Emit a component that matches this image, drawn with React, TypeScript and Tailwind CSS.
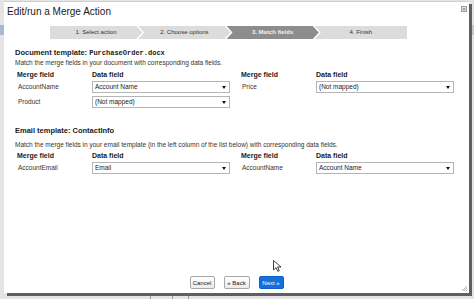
import React from "react";

type Row = { field: string; value: string };

const steps = ["1. Select action", "2. Choose options", "3. Match fields", "4. Finish"];

function Select({ value }: { value: string }) {
  return (
    <div className="flex h-[12px] w-[138px] items-center justify-between border border-[#b5b5b5] bg-white pl-[2px] pr-[3px] text-[6.5px] leading-none text-[#222]">
      <span>{value}</span>
      <span className="h-0 w-0 border-x-[2px] border-t-[3px] border-x-transparent border-t-[#111]" />
    </div>
  );
}

function FieldTable({ rows }: { rows: Row[] }) {
  return (
    <div className="flex w-[214px] flex-col gap-[3px] self-start">
      <div className="-mb-[2px] flex h-[10px] items-center text-[7px] font-bold text-[#222]">
        <span className="w-[76px] pl-[1px]">Merge field</span>
        <span>Data field</span>
      </div>
      {rows.map((r) => (
        <div key={r.field} className="flex items-center">
          <span className="w-[76px] pl-[2px] text-[6.5px] text-[#333]">{r.field}</span>
          <Select value={r.value} />
        </div>
      ))}
    </div>
  );
}

function Stepper() {
  return (
    <div className="ml-[46px] flex h-[13px] w-[357px]">
      {steps.map((s, i) => {
        const first = i === 0;
        const last = i === steps.length - 1;
        const active = i === 2;
        const clip = first
          ? "[clip-path:polygon(0_0,calc(100%_-_6px)_0,100%_50%,calc(100%_-_6px)_100%,0_100%)]"
          : last
          ? "[clip-path:polygon(0_0,100%_0,100%_100%,0_100%,6px_50%)]"
          : "[clip-path:polygon(0_0,calc(100%_-_6px)_0,100%_50%,calc(100%_-_6px)_100%,0_100%,6px_50%)]";
        return (
          <div
            key={s}
            className={`flex flex-1 items-center justify-center text-[6px] ${first ? "" : "-ml-[4px]"} ${clip} ${
              active ? "bg-[#8d8d8d] font-bold text-[#f2f2f2]" : "bg-[#dcdcdc] text-[#333]"
            }`}
          >
            {s}
          </div>
        );
      })}
    </div>
  );
}

export default function App() {
  return (
    <div className="relative h-[299px] w-[474px] overflow-hidden bg-[#e4e4e4] font-['Liberation_Sans',Arial,sans-serif]">
      {/* page behind the dialog */}
      <div className="absolute left-0 top-[25px] h-[10px] w-[6px] bg-[#a9b9cf]" />
      <div className="absolute right-0 top-[25px] h-[10px] w-[4px] bg-[#c9c9c9]" />
      <div className="absolute bottom-0 left-[150px] h-[4px] w-[1px] bg-[#9a9a9a]" />
      <div className="absolute bottom-0 left-[172px] h-[4px] w-[1px] bg-[#9a9a9a]" />
      <div className="absolute bottom-0 left-[188px] h-[4px] w-[1px] bg-[#9a9a9a]" />

      {/* dialog */}
      <div className="absolute left-[4px] top-[1px] flex h-[292px] w-[465px] flex-col border-t border-[#cfcfcf] bg-white shadow-[3px_3px_0_#5f5f5f]">
        <div className="flex items-start justify-between pl-[3px] pr-[2px] pt-[3px]">
          <h1 className="text-[10px] leading-[14px] text-[#1a1a1a]">Edit/run a Merge Action</h1>
          <div className="mt-[1px] flex h-[6px] w-[6px] items-center justify-center border border-[#9a9a9a] bg-[#e6e6e6] text-[5px] leading-none text-[#444]">
            ×
          </div>
        </div>

        <div className="mt-[7px]">
          <Stepper />
        </div>

        <div className="mt-[9px] pl-[11px]">
          <div className="text-[7.5px] font-bold leading-[10px] text-[#1a1a1a]">
            Document template:{" "}
            <span className="font-['Liberation_Mono',monospace] text-[7px]">PurchaseOrder.docx</span>
          </div>
          <p className="text-[6.5px] leading-[9px] text-[#333]">
            Match the merge fields in your document with corresponding data fields.
          </p>
          <div className="mt-[3px] flex gap-[10px] pl-[1px]">
            <FieldTable
              rows={[
                { field: "AccountName", value: "Account Name" },
                { field: "Product", value: "(Not mapped)" },
              ]}
            />
            <FieldTable rows={[{ field: "Price", value: "(Not mapped)" }]} />
          </div>

          <div className="mt-[18px] text-[7.5px] font-bold leading-[10px] text-[#1a1a1a]">
            Email template: ContactInfo
          </div>
          <p className="mt-[4px] text-[6.5px] leading-[9px] text-[#333]">
            Match the merge fields in your email template (in the left column of the list below) with corresponding data
            fields.
          </p>
          <div className="mt-[2px] flex gap-[10px] pl-[1px]">
            <FieldTable rows={[{ field: "AccountEmail", value: "Email" }]} />
            <FieldTable rows={[{ field: "AccountName", value: "Account Name" }]} />
          </div>
        </div>

        <div className="mt-auto flex justify-center gap-[9px] pb-[4px]">
          <button className="h-[13px] w-[25px] rounded-[2px] border border-[#a8a8a8] bg-gradient-to-b from-white to-[#ececec] text-[6px] leading-none text-[#222]">
            Cancel
          </button>
          <button className="h-[13px] w-[26px] rounded-[2px] border border-[#a8a8a8] bg-gradient-to-b from-white to-[#ececec] text-[6px] leading-none text-[#222]">
            « Back
          </button>
          <button className="h-[13px] w-[25px] rounded-[2px] border border-[#0f5fc4] bg-[#1670dc] text-[6px] leading-none text-white">
            Next »
          </button>
        </div>

        {/* resize grip */}
        <svg className="absolute bottom-[1px] right-[1px]" width="7" height="7" viewBox="0 0 7 7">
          <path d="M6 1L1 6M6 3L3 6M6 5L5 6" stroke="#9a9a9a" strokeWidth="0.8" />
        </svg>
      </div>

      {/* mouse pointer */}
      <svg className="absolute left-[273px] top-[260px]" width="9" height="12" viewBox="0 0 9 12">
        <path d="M0.5 0.5V10L3 7.6L4.8 11.4L6.3 10.7L4.6 7H8Z" fill="#fff" stroke="#111" strokeWidth="0.8" strokeLinejoin="round" />
      </svg>
    </div>
  );
}
